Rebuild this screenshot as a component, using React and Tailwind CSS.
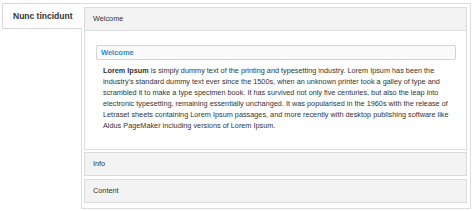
export default function App() {
  const font = { fontFamily: '"Liberation Sans", Arial, sans-serif' };
  return (
    <div className="h-[211px] w-[474px] bg-white pl-[2px] pt-[3px] antialiased" style={font}>
      <div className="flex">
        {/* vertical tab list */}
        <div className="w-[80px] shrink-0">
          <div className="relative z-10 flex h-[26px] w-[80px] items-center border-y border-l border-[#d8d8d8] bg-white pl-[10px] text-[8.5px] font-bold text-[#333]">
            Nunc tincidunt
          </div>
        </div>

        {/* panel */}
        <div className="-ml-px h-[206px] w-[390px] border border-[#dddddd] px-[2px] pt-[3px]">
          <div className="flex h-[24px] w-[383px] items-center border border-[#dcdcdc] bg-[#f3f3f3] pl-[8px] text-[7.3px] text-[#333]">
            Welcome
          </div>
          <div className="h-[119px] w-[383px] border-x border-b border-[#dcdcdc] bg-white pl-[11px] pr-[10px] pt-[14px]">
            <div className="flex h-[15px] items-center rounded-[2px] border border-[#d4d4d4] bg-[#fafafa] pl-[4px] text-[7.5px] font-bold text-[#2a8cc8]">
              Welcome
            </div>
            <p className="mt-[6px] pl-[7px] text-[7.3px] leading-[10.9px] text-[#333]">
              <b>Lorem Ipsum</b> is simply dummy text of the printing and typesetting industry. Lorem Ipsum has been the
              industry's standard dummy text ever since the 1500s, when an unknown printer took a galley of type and
              scrambled it to make a type specimen book. It has survived not only five centuries, but also the leap into
              electronic typesetting, remaining essentially unchanged. It was popularised in the 1960s with the release of
              Letraset sheets containing Lorem Ipsum passages, and more recently with desktop publishing software like
              Aldus PageMaker including versions of Lorem Ipsum.
            </p>
          </div>
          <div className="mt-[2px] flex h-[24px] w-[383px] items-center border border-[#dcdcdc] bg-[#f3f3f3] pl-[8px] text-[7.3px] text-[#333]">
            Info
          </div>
          <div className="mt-[3px] flex h-[24px] w-[383px] items-center border border-[#dcdcdc] bg-[#f3f3f3] pl-[8px] text-[7.3px] text-[#333]">
            Content
          </div>
        </div>
      </div>
    </div>
  );
}
